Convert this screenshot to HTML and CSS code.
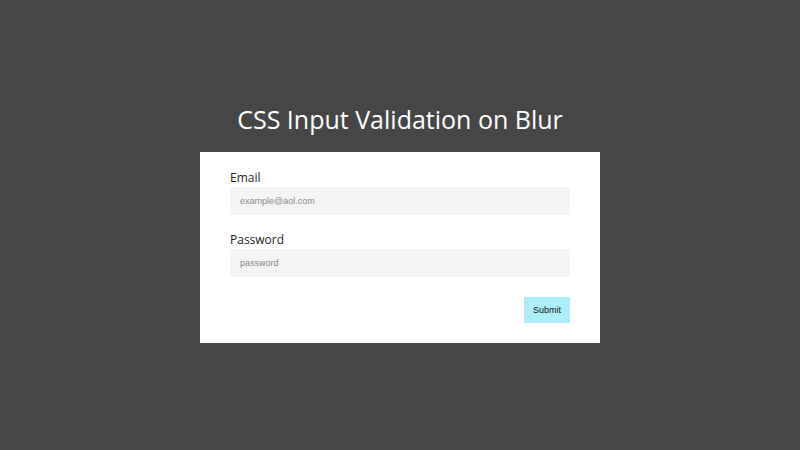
FILE: index.html
```html
<!DOCTYPE html>
<html>
<head>
<meta charset="utf-8">
<link rel="stylesheet" href="styles.css">
</head>
<body>
<main class="page">
  <h1 class="title">CSS Input Validation on Blur</h1>
  <form class="card">
    <label class="field">
      <span class="label">Email</span>
      <input class="input" type="email" placeholder="example@aol.com">
    </label>
    <label class="field">
      <span class="label">Password</span>
      <input class="input" type="password" placeholder="password">
    </label>
    <div class="actions">
      <button class="submit" type="button">Submit</button>
    </div>
  </form>
</main>
</body>
</html>
```
FILE: styles.css
```css
html, body {
  margin: 0;
  height: 100%;
  background: #464646;
}

.page {
  display: flex;
  flex-direction: column;
  align-items: center;
  padding-top: 100px;
}

.title {
  margin: 0 0 14px;
  font-family: "Open Sans", sans-serif;
  font-weight: 400;
  font-size: 25px;
  line-height: 38px;
  color: #fff;
}

.card {
  box-sizing: border-box;
  width: 400px;
  background: #fff;
  padding: 17px 30px 20px;
  display: flex;
  flex-direction: column;
}

.field {
  display: flex;
  flex-direction: column;
  margin-bottom: 16px;
}

.label {
  font-family: "Open Sans", sans-serif;
  font-size: 12px;
  line-height: 17px;
  color: #222;
  margin-bottom: 1px;
}

.input {
  box-sizing: border-box;
  height: 28px;
  border: none;
  outline: none;
  background: #f4f4f4;
  padding: 0 10px;
  font-family: "Liberation Sans", sans-serif;
  font-size: 9px;
  color: #333;
}

.input::placeholder {
  color: #8a8a8a;
}

.actions {
  display: flex;
  justify-content: flex-end;
  margin-top: 4px;
}

.submit {
  width: 46px;
  height: 26px;
  border: none;
  background: #aeeefa;
  font-family: "Liberation Sans", sans-serif;
  font-size: 9px;
  color: #111;
  padding: 0;
}
```
